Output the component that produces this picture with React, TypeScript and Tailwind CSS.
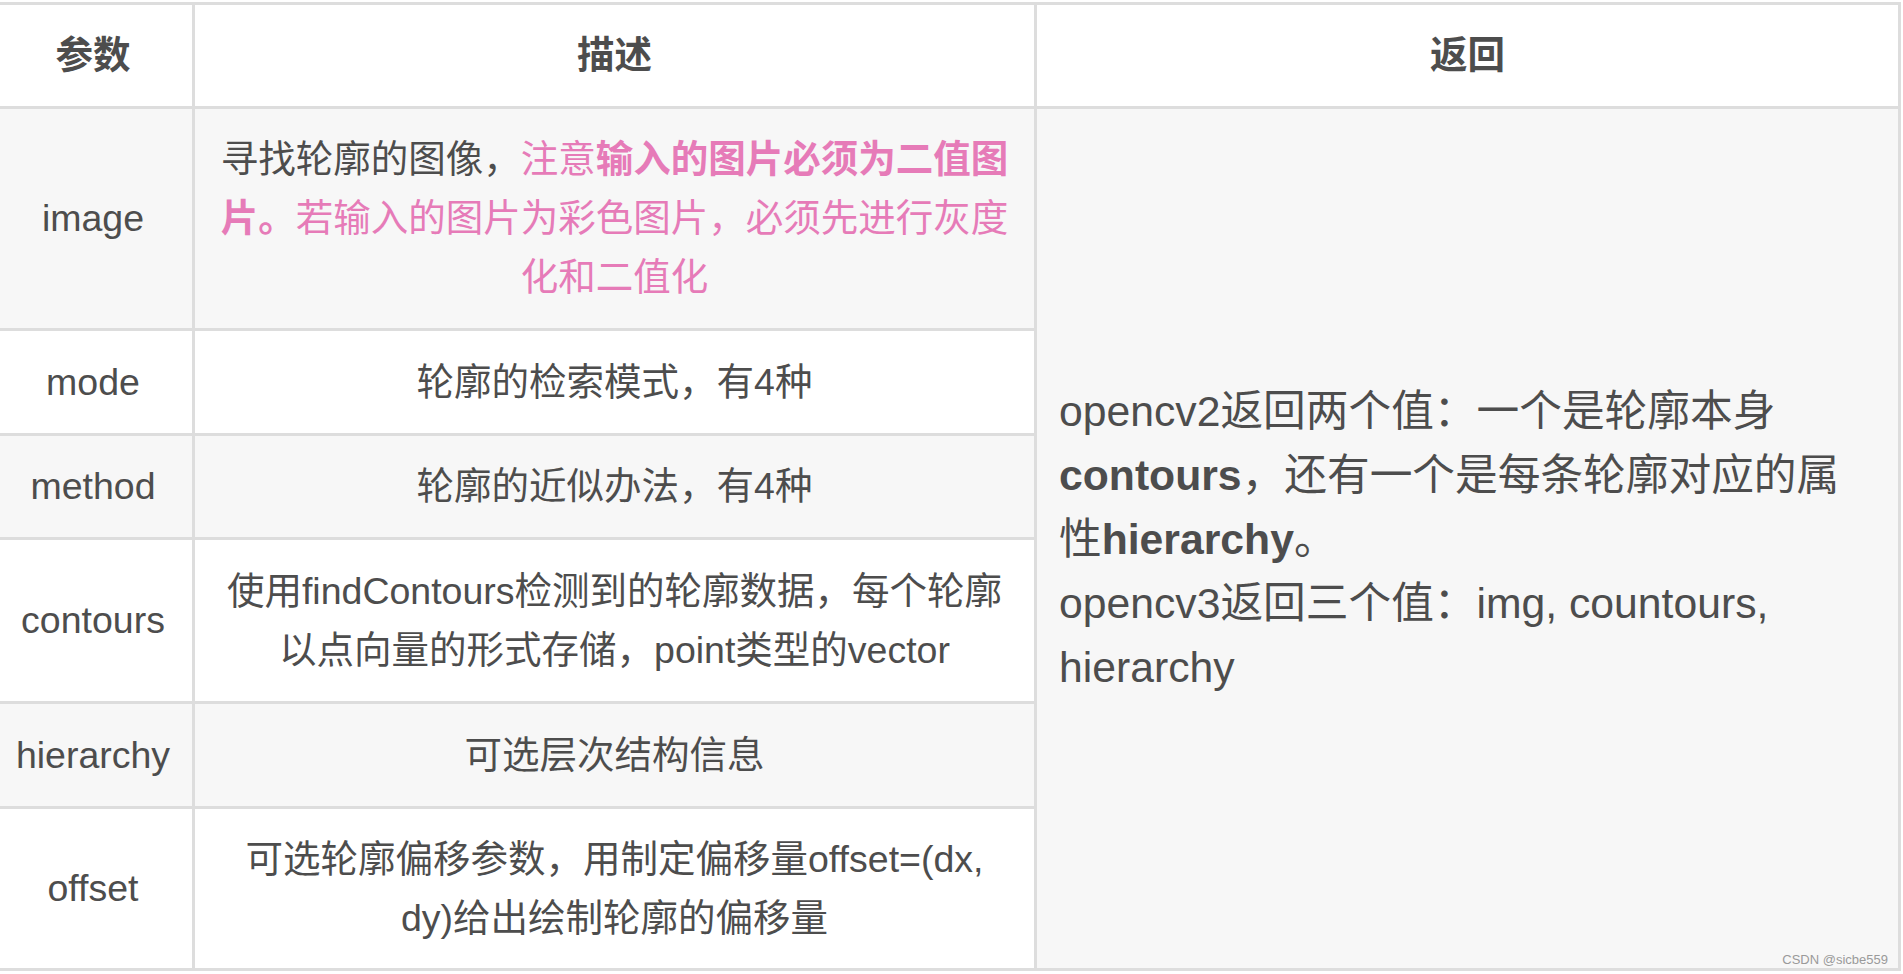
import React from 'react'

const font = { fontFamily: '"Liberation Sans", "Noto Sans CJK SC", sans-serif' }

function ParamCell({ children, shaded }: { children: React.ReactNode; shaded?: boolean }) {
  return (
    <div className={`flex items-center justify-center text-center px-2 text-[37.5px] leading-[59px] ${shaded ? 'bg-[#f7f7f7]' : 'bg-white'}`}>
      {children}
    </div>
  )
}

function DescCell({ children, shaded }: { children: React.ReactNode; shaded?: boolean }) {
  return (
    <div className={`flex items-center justify-center text-center px-6 text-[37.5px] leading-[59px] ${shaded ? 'bg-[#f7f7f7]' : 'bg-white'}`}>
      <p>{children}</p>
    </div>
  )
}

export default function App() {
  return (
    <div className="min-h-screen bg-white text-[#4d4d4d] overflow-hidden" style={font}>
      <div className="mt-[2px] -ml-[9px] w-[1910px] grid grid-cols-[198px_839px_861px] grid-rows-[101px_219px_102px_101px_161px_102px_159px] gap-[3px] bg-[#dddddd] p-[3px]">
        {/* header */}
        <div className="flex items-center justify-center bg-white text-[37.5px] font-bold">参数</div>
        <div className="flex items-center justify-center bg-white text-[37.5px] font-bold">描述</div>
        <div className="flex items-center justify-center bg-white text-[37.5px] font-bold">返回</div>

        {/* image */}
        <ParamCell shaded>image</ParamCell>
        <DescCell shaded>
          寻找轮廓的图像，
          <span className="text-[#e67bb8]">
            注意<strong>输入的图片必须为二值图片。</strong>若输入的图片为彩色图片，必须先进行灰度化和二值化
          </span>
        </DescCell>

        {/* return spans all body rows */}
        <div className="relative col-start-3 row-start-2 row-span-6 flex items-center bg-[#f7f7f7] px-[22px] text-[42.7px] leading-[64px]">
          <p>
            opencv2返回两个值：一个是轮廓本身<strong>contours</strong>，还有一个是每条轮廓对应的属性<strong>hierarchy</strong>。
            <br />
            opencv3返回三个值：img, countours, hierarchy
          </p>
          <span className="absolute bottom-[2px] right-[10px] text-[13px] leading-none text-[#9a9a9a]">CSDN @sicbe559</span>
        </div>

        <ParamCell>mode</ParamCell>
        <DescCell>轮廓的检索模式，有4种</DescCell>

        <ParamCell shaded>method</ParamCell>
        <DescCell shaded>轮廓的近似办法，有4种</DescCell>

        <ParamCell>contours</ParamCell>
        <DescCell>使用findContours检测到的轮廓数据，每个轮廓以点向量的形式存储，point类型的vector</DescCell>

        <ParamCell shaded>hierarchy</ParamCell>
        <DescCell shaded>可选层次结构信息</DescCell>

        <ParamCell>offset</ParamCell>
        <DescCell>可选轮廓偏移参数，用制定偏移量offset=(dx, dy)给出绘制轮廓的偏移量</DescCell>
      </div>
    </div>
  )
}
